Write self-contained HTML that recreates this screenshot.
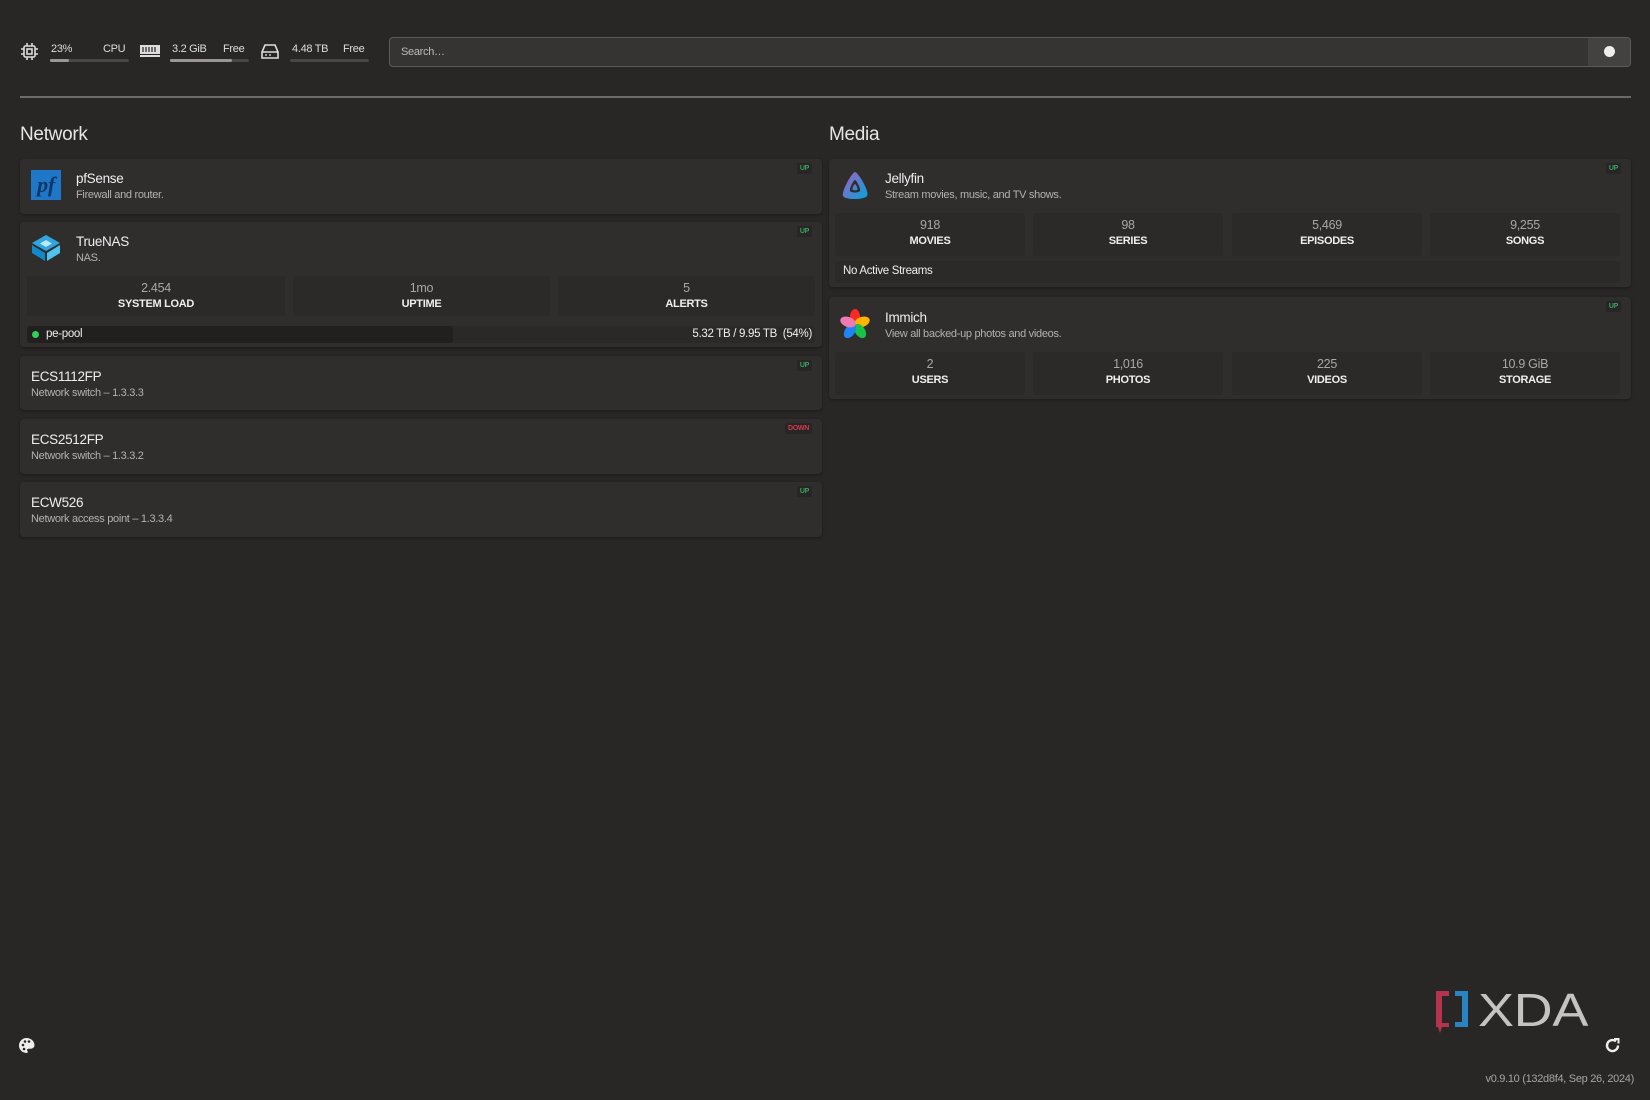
<!DOCTYPE html>
<html><head><meta charset="utf-8"><style>
*{box-sizing:border-box;margin:0;padding:0}
body{width:1650px;height:1100px;background:#292626;font-family:"Liberation Sans",sans-serif;color:#e8e6e6;position:relative;overflow:hidden;letter-spacing:-0.3px}
.abs{position:absolute}
.bar{position:absolute;height:3px;background:#4a4646;border-radius:2px}
.bar i{display:block;height:3px;background:#9a9696;border-radius:2px}
.card{position:absolute;background:#302d2d;border-radius:4px;box-shadow:0 1px 3px rgba(0,0,0,.35)}
.t{position:absolute;font-size:13.5px;color:#eee}
.s{position:absolute;font-size:11px;color:#b5b1b1}
.badge{position:absolute;font-size:7px;color:#3aa35e;background:#272525;padding:2px 3px;border-radius:2px;font-weight:bold}
.stat{position:absolute;background:#2c2929;border-radius:3px;text-align:center}
.stat .v{font-size:12.5px;color:#aaa6a6;margin-top:5px;line-height:15px}
.stat .l{font-size:11px;font-weight:bold;color:#f0eeee;margin-top:2px;line-height:13px}
h2{position:absolute;font-weight:normal;font-size:19px;color:#e6e4e4}
</style></head><body>
<svg class="abs" style="left:20px;top:42px" width="19" height="19" viewBox="0 0 19 19" fill="none" stroke="#ddd" stroke-width="1.6"><rect x="4" y="4" width="11" height="11" rx="1.5"/><rect x="7" y="7" width="5" height="5"/><path d="M7 1v3M12 1v3M7 15v3M12 15v3M1 7h3M1 12h3M15 7h3M15 12h3"/></svg>
<div class="abs" style="left:51px;top:43px;font-size:11px;color:#ddd">23%</div>
<div class="abs" style="left:103px;top:43px;font-size:11px;color:#ddd">CPU</div>
<div class="bar" style="left:50px;top:59px;width:79px"><i style="width:19px"></i></div>
<svg class="abs" style="left:140px;top:44px" width="20" height="14" viewBox="0 0 20 14"><rect x="0" y="1" width="20" height="9" fill="#ddd"/><path d="M3 3v5M6 3v5M9 3v5M12 3v5M15 3v5" stroke="#292626" stroke-width="1.2"/><rect x="0" y="11" width="20" height="2" fill="#ddd"/></svg>
<div class="abs" style="left:172px;top:43px;font-size:11px;color:#ddd">3.2 GiB</div>
<div class="abs" style="left:223px;top:43px;font-size:11px;color:#ddd">Free</div>
<div class="bar" style="left:170px;top:59px;width:79px"><i style="width:62px"></i></div>
<svg class="abs" style="left:260px;top:43px" width="20" height="17" viewBox="0 0 20 17" fill="none" stroke="#ddd" stroke-width="1.6"><path d="M2 9l3-7h10l3 7v6H2z M2 9h16"/><path d="M5 12h2M9 12h2" stroke-width="1.2"/></svg>
<div class="abs" style="left:292px;top:43px;font-size:11px;color:#ddd">4.48 TB</div>
<div class="abs" style="left:343px;top:43px;font-size:11px;color:#ddd">Free</div>
<div class="bar" style="left:290px;top:59px;width:79px"></div>
<div class="abs" style="left:389px;top:37px;width:1242px;height:30px;border:1.5px solid #5e5a5a;border-radius:4px;background:#363333;overflow:hidden">
<div class="abs" style="left:11px;top:8px;font-size:11px;color:#bbb">Search…</div>
<div class="abs" style="right:0;top:0;width:42px;height:28px;background:#444141"></div>
<div class="abs" style="right:15px;top:8px;width:11px;height:11px;border-radius:50%;background:#eee"></div>
</div>
<div class="abs" style="left:20px;top:96px;width:1611px;height:2px;background:#6e6a6a"></div>

<h2 style="left:20px;top:124px">Network</h2>
<h2 style="left:829px;top:124px">Media</h2>

<div class="card" style="left:20px;top:159px;width:802px;height:55px">
<div class="abs" style="left:11px;top:11px;width:30px;height:30px;background:#1f77c8;color:#0d3766;font:italic bold 22px 'Liberation Serif',serif;line-height:30px;text-align:center">pf</div>
<div class="t" style="left:56px;top:12px">pfSense</div>
<div class="s" style="left:56px;top:30px">Firewall and router.</div>
<div class="badge" style="right:10px;top:4px">UP</div>
</div>
<div class="card" style="left:20px;top:222px;width:802px;height:125px">
<svg class="abs" style="left:11px;top:12px" width="30" height="28" viewBox="0 0 30 28"><path d="M15 1L29 9 15 17 1 9z" fill="#2fa6df"/><path d="M1 11l13 8v8L1 19z" fill="#0f89c9"/><path d="M29 11l-13 8v8l13-8z" fill="#4dc3ee"/><path d="M15 6l6 3.5-6 3.5-6-3.5z" fill="#bfe7f7"/></svg>
<div class="t" style="left:56px;top:12px">TrueNAS</div>
<div class="s" style="left:56px;top:30px">NAS.</div>
<div class="badge" style="right:10px;top:4px">UP</div>
<div class="stat" style="left:7px;top:54px;width:258px;height:40px"><div class="v">2.454</div><div class="l">SYSTEM LOAD</div></div>
<div class="stat" style="left:273px;top:54px;width:257px;height:40px"><div class="v">1mo</div><div class="l">UPTIME</div></div>
<div class="stat" style="left:538px;top:54px;width:257px;height:40px"><div class="v">5</div><div class="l">ALERTS</div></div>
<div class="abs" style="left:7px;top:104px;width:788px;height:17px;background:#2b2828;border-radius:3px"></div>
<div class="abs" style="left:7px;top:104px;width:426px;height:17px;background:#221f1f;border-radius:3px"></div>
<div class="abs" style="left:12px;top:109px;width:7px;height:7px;border-radius:50%;background:#2fcf5c"></div>
<div class="abs" style="left:26px;top:106px;font-size:11.5px;color:#eee">pe-pool</div>
<div class="abs" style="right:10px;top:106px;font-size:11.5px;color:#eee">5.32 TB / 9.95 TB &nbsp;(54%)</div>
</div>
<div class="card" style="left:20px;top:356px;width:802px;height:54px">
<div class="t" style="left:11px;top:13px">ECS1112FP</div><div class="s" style="left:11px;top:31px">Network switch – 1.3.3.3</div><div class="badge" style="right:10px;top:4px">UP</div></div>
<div class="card" style="left:20px;top:419px;width:802px;height:55px">
<div class="t" style="left:11px;top:13px">ECS2512FP</div><div class="s" style="left:11px;top:31px">Network switch – 1.3.3.2</div><div class="badge" style="right:10px;top:4px;color:#d23a4e">DOWN</div></div>
<div class="card" style="left:20px;top:482px;width:802px;height:55px">
<div class="t" style="left:11px;top:13px">ECW526</div><div class="s" style="left:11px;top:31px">Network access point – 1.3.3.4</div><div class="badge" style="right:10px;top:4px">UP</div></div>

<div class="card" style="left:829px;top:159px;width:802px;height:128px">
<svg class="abs" style="left:11px;top:11px" width="30" height="30" viewBox="0 0 30 30"><defs><linearGradient id="jg" x1="0" y1="0" x2="1" y2="1"><stop offset="0" stop-color="#aa5cc3"/><stop offset="1" stop-color="#00a4dc"/></linearGradient></defs><path d="M15 2C12 2 1 22 3 26s21 4 24 0S18 2 15 2z" fill="url(#jg)"/><path d="M15 10c-1.5 0-6 9-5 11s9 2 10 0-3.5-11-5-11z" fill="#302d2d"/><path d="M15 14c-.8 0-3 4.5-2.5 5.5s4.5 1 5 0S15.8 14 15 14z" fill="url(#jg)"/></svg>
<div class="t" style="left:56px;top:12px">Jellyfin</div>
<div class="s" style="left:56px;top:30px">Stream movies, music, and TV shows.</div>
<div class="badge" style="right:10px;top:4px">UP</div>
<div class="stat" style="left:6px;top:54px;width:190px;height:43px"><div class="v">918</div><div class="l">MOVIES</div></div>
<div class="stat" style="left:204px;top:54px;width:190px;height:43px"><div class="v">98</div><div class="l">SERIES</div></div>
<div class="stat" style="left:403px;top:54px;width:190px;height:43px"><div class="v">5,469</div><div class="l">EPISODES</div></div>
<div class="stat" style="left:601px;top:54px;width:190px;height:43px"><div class="v">9,255</div><div class="l">SONGS</div></div>
<div class="abs" style="left:6px;top:102px;width:785px;height:22px;background:#2c2929;border-radius:3px"></div>
<div class="abs" style="left:14px;top:106px;font-size:11.5px;color:#eee">No Active Streams</div>
</div>
<div class="card" style="left:829px;top:297px;width:802px;height:102px">
<svg class="abs" style="left:11px;top:11px" width="30" height="32" viewBox="0 0 30 32"><ellipse cx="15" cy="9" rx="5" ry="8" fill="#fa2921"/><ellipse cx="22" cy="14" rx="5" ry="8" fill="#ffb400" transform="rotate(70 22 14)"/><ellipse cx="20" cy="23" rx="5" ry="8" fill="#18c249" transform="rotate(145 20 23)"/><ellipse cx="10" cy="23" rx="5" ry="8" fill="#1e83f7" transform="rotate(-145 10 23)"/><ellipse cx="8" cy="14" rx="5" ry="8" fill="#ed79b5" transform="rotate(-70 8 14)"/></svg>
<div class="t" style="left:56px;top:13px">Immich</div>
<div class="s" style="left:56px;top:31px">View all backed-up photos and videos.</div>
<div class="badge" style="right:10px;top:4px">UP</div>
<div class="stat" style="left:6px;top:55px;width:190px;height:43px"><div class="v">2</div><div class="l">USERS</div></div>
<div class="stat" style="left:204px;top:55px;width:190px;height:43px"><div class="v">1,016</div><div class="l">PHOTOS</div></div>
<div class="stat" style="left:403px;top:55px;width:190px;height:43px"><div class="v">225</div><div class="l">VIDEOS</div></div>
<div class="stat" style="left:601px;top:55px;width:190px;height:43px"><div class="v">10.9 GiB</div><div class="l">STORAGE</div></div>
</div>

<svg class="abs" style="left:18px;top:1037px" width="17" height="17" viewBox="0 0 17 17"><path d="M8.5 1a7.5 7.5 0 1 0 0 15c1.5 0 1.5-1.5.8-2.3-.6-.8 0-2 1.2-2H13a3.5 3.5 0 0 0 3.5-3.5C16.5 4.3 13 1 8.5 1z" fill="#eee"/><circle cx="5" cy="8" r="1.3" fill="#292626"/><circle cx="7" cy="4.5" r="1.3" fill="#292626"/><circle cx="11" cy="4.5" r="1.3" fill="#292626"/><circle cx="6" cy="12" r="1.3" fill="#292626"/></svg>
<svg class="abs" style="left:1434px;top:989px" width="160" height="44" viewBox="0 0 160 44"><path d="M2 2h13v5H8v27h7v4H8l-2 6-2-6H2z" fill="#b5334f"/><path d="M21 2h13v36H21v-5h7V7h-7z" fill="#2a84c4"/><text x="44" y="37" font-family="Liberation Sans,sans-serif" font-size="46" fill="#c4c2c2" textLength="110" lengthAdjust="spacingAndGlyphs">XDA</text></svg>
<svg class="abs" style="left:1604px;top:1037px" width="17" height="17" viewBox="0 0 17 17" fill="none" stroke="#eee" stroke-width="2.4"><path d="M14 8.5a5.5 5.5 0 1 1-2-4.2"/><path d="M10 2h4.5v4.5" stroke-width="2"/></svg>
<div class="abs" style="right:16px;top:1073px;font-size:11px;color:#a8a4a4">v0.9.10 (132d8f4, Sep 26, 2024)</div>
</body></html>
